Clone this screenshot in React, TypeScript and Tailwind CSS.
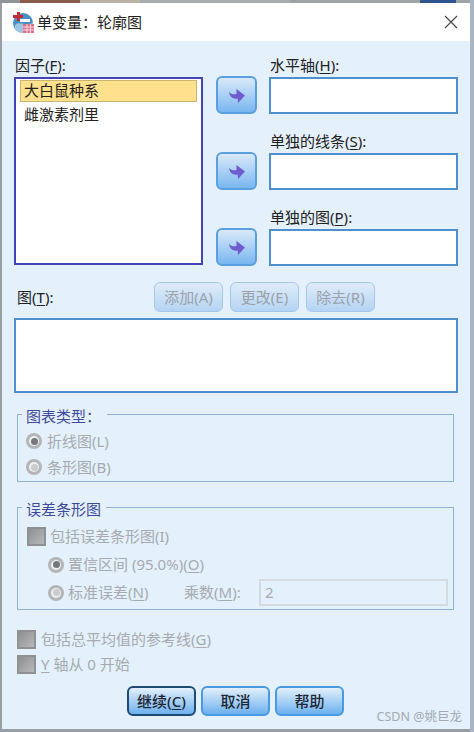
import React from 'react';

const font = "font-['Noto_Sans','Noto_Sans_CJK_SC',sans-serif]";

// 访问键下划线
const Key = ({ k }: { k: string }) => (
  <>
    (<span className="underline underline-offset-2">{k}</span>)
  </>
);

const ArrowButton = () => (
  <button className="w-[41px] h-[38px] shrink-0 rounded-[6px] border-2 border-[#5aa0e0] bg-gradient-to-b from-[#d9e9f9] to-[#78b6f0] flex items-center justify-center">
    <svg width="18" height="17" viewBox="0 0 16 16">
      <path d="M0.5 4.5 C2.5 7 5 7.2 7.5 6.6 L7.5 1.8 L15.5 8 L9 15 L8.6 10.8 C4.5 11.6 1 9.500 0.5 4.5 Z" fill="#6f5ccf" />
    </svg>
  </button>
);

const Radio = ({ on }: { on?: boolean }) => (
  <span className="w-4 h-4 shrink-0 rounded-full bg-[#b4b6b8] flex items-center justify-center">
    <span className="w-[10px] h-[10px] rounded-full bg-[#eef1f3] flex items-center justify-center">
      <span className={`w-[7px] h-[7px] rounded-full ${on ? 'bg-[#75777a]' : 'bg-[#c9cbcd]'}`} />
    </span>
  </span>
);

const Check = () => (
  <span className="w-[19px] h-[19px] shrink-0 border-2 border-[#8f9193] bg-gradient-to-br from-[#8e9092] to-[#b6b8ba]" />
);

const Field = ({ label, k }: { label: string; k: string }) => (
  <div className="flex items-end gap-3">
    <ArrowButton />
    <div className="w-[189px]">
      <div className="h-[21px] leading-[19px] pl-[1px] text-[#222]">
        {label}
        <Key k={k} />:
      </div>
      <div className="h-[37px] bg-white border-2 border-[#4f8fcb]" />
    </div>
  </div>
);

const ActionButton = ({ label, k }: { label: string; k: string }) => (
  <button className="w-[69px] h-[30px] rounded-[6px] border border-[#a3c8ec] bg-gradient-to-b from-[#dfecf9] to-[#b5d4f3] text-[#9aa2aa]">
    {label}({k})
  </button>
);

const Footer = ({ label, k, primary }: { label: string; k?: string; primary?: boolean }) => (
  <button
    className={`w-[69px] h-[30px] rounded-[6px] border-2 bg-gradient-to-b from-[#e3effb] to-[#6cb0ee] text-[#1c2733] font-medium ${
      primary ? 'border-[#1f4a73]' : 'border-[#4a9ae0]'
    }`}
  >
    {label}
    {k && <Key k={k} />}
  </button>
);

const strip = [
  'w-5 bg-[#8f9499]', 'w-[60px] bg-[#8a5a48]', 'w-[60px] bg-[#b9b2a8]', 'w-[150px] bg-[#a8abb0]',
  'w-[130px] bg-[#9fa2a6]', 'w-[36px] bg-[#2f5590]', 'w-[18px] bg-[#a0a4aa]',
];

export default function App() {
  return (
    <div className={`relative w-[474px] h-[732px] overflow-hidden bg-[#9a9ea3] text-[15px] ${font}`}>
      <div className="flex h-[3px]">
        {strip.map((c, i) => <div key={i} className={c} />)}
      </div>

      {/* Venster */}
      <div className="ml-[2px] w-[468px] h-[726px] bg-[#e4f0fb]">
        {/* Titelbalk */}
        <div className="h-[38px] bg-white flex items-center justify-between pl-[10px] pr-[12px]">
          <div className="flex items-center gap-[3px]">
            <svg width="22" height="24" viewBox="0 0 22 24">
              <circle cx="11" cy="13" r="10" fill="#4a8fc4" />
              <path d="M3 15 C8 10 15 18 21 12 A10 10 0 0 1 3 19 Z" fill="#9cc6e4" />
              <rect x="8" y="9" width="10" height="3" fill="#ffffff" />
              <path d="M5 2 H8 V5 H11 V8 H8 V11 H5 V8 H1 V5 H5 Z" fill="#c22b3a" />
              <rect x="11" y="14" width="11" height="9" fill="#d9708a" />
              <path d="M11 17 H22 M11 20 H22 M15 14 V23 M18.500 14 V23" stroke="#f7dbe2" strokeWidth="1" />
            </svg>
            <span className="text-[#222]">单变量：轮廓图</span>
          </div>
          <svg width="14" height="14" viewBox="0 0 14 14">
            <path d="M1 1 L13 13 M13 1 L1 13" stroke="#444" strokeWidth="1.100" />
          </svg>
        </div>

        {/* Inhoud */}
        <div className="pl-3 pt-[15px]">
          <div className="flex gap-[13px] items-start">
            <div className="w-[189px]">
              <div className="h-[21px] leading-[19px] pl-[1px] text-[#222]">
                因子<Key k="F" />:
              </div>
              <div className="h-[188px] bg-white border-2 border-[#4444b4] px-1 pt-[1px] text-[#222]">
                <div className="h-[22px] leading-[18px] w-[177px] bg-[#ffe08c] border border-[#c9b56e] pl-[3px]">大白鼠种系</div>
                <div className="h-[24px] leading-[22px] mt-[1px] pl-1">雌激素剂里</div>
              </div>
            </div>
            <div className="flex flex-col gap-[18px]">
              <Field label="水平轴" k="H" />
              <Field label="单独的线条" k="S" />
              <Field label="单独的图" k="P" />
            </div>
          </div>

          <div className="mt-[16px] flex items-center">
            <div className="w-[140px] pl-[3px] text-[#222]">
              图<Key k="T" />:
            </div>
            <div className="flex gap-[7px]">
              <ActionButton label="添加" k="A" />
              <ActionButton label="更改" k="E" />
              <ActionButton label="除去" k="R" />
            </div>
          </div>

          <div className="mt-[6px] w-[444px] h-[75px] bg-white border-2 border-[#4f8fcb]" />

          <fieldset className="mt-[11px] ml-[3px] w-[437px] h-[78px] border border-[#8fb2d6] pl-2">
            <legend className="ml-[-4px] pl-1 pr-[6px] h-5 leading-[24px] text-[#3f4a9c]">图表类型：</legend>
            <div className="flex items-center gap-[5px] h-[26px] text-[#a6abb0] mt-[4px]">
              <Radio on />
              <span>折线图(L)</span>
            </div>
            <div className="flex items-center gap-[5px] h-[26px] text-[#a6abb0]">
              <Radio />
              <span>条形图(B)</span>
            </div>
          </fieldset>

          <fieldset className="mt-[15px] ml-[3px] w-[437px] h-[113px] border border-[#8fb2d6] pl-[9px] text-[#a6abb0]">
            <legend className="ml-[-5px] pl-1 pr-[5px] h-5 leading-[24px] text-[#3f4a9c]">误差条形图</legend>
            <div className="flex items-center gap-[4px] h-[28px] mt-[5px]">
              <Check />
              <span>包括误差条形图(I)</span>
            </div>
            <div className="pl-[21px]">
              <div className="flex items-center gap-[4px] h-[29px]">
                <Radio on />
                <span>置信区间 (95.0%)<Key k="O" /></span>
              </div>
              <div className="flex items-center h-[27px]">
                <Radio />
                <span className="ml-[4px] w-[116px]">标准误差<Key k="N" /></span>
                <span className="w-[75px]">乘数<Key k="M" />:</span>
                <div className="w-[189px] h-[27px] border-2 border-[#d3dae0] pl-[4px] leading-[23px]">2</div>
              </div>
            </div>
          </fieldset>

          <div className="mt-5 ml-[3px] flex items-center gap-[5px] h-[18px] text-[#a6abb0]">
            <Check />
            <span>包括总平均值的参考线<Key k="G" /></span>
          </div>
          <div className="mt-[7px] ml-[3px] flex items-center gap-[5px] h-[18px] text-[#a6abb0]">
            <Check />
            <span><span className="underline underline-offset-2">Y</span> 轴从 0 开始</span>
          </div>

          <div className="mt-[13px] ml-[113px] flex gap-[5px]">
            <Footer label="继续" k="C" primary />
            <Footer label="取消" />
            <Footer label="帮助" />
          </div>
        </div>
      </div>

      {/* Watermerk */}
      <div className="absolute right-[12px] bottom-[5px] text-[12.5px] text-[#a3aab2]">CSDN @姚巨龙</div>
      <div className="absolute top-0 right-0 w-1 h-full bg-[#a9b5c2]" />
    </div>
  );
}
